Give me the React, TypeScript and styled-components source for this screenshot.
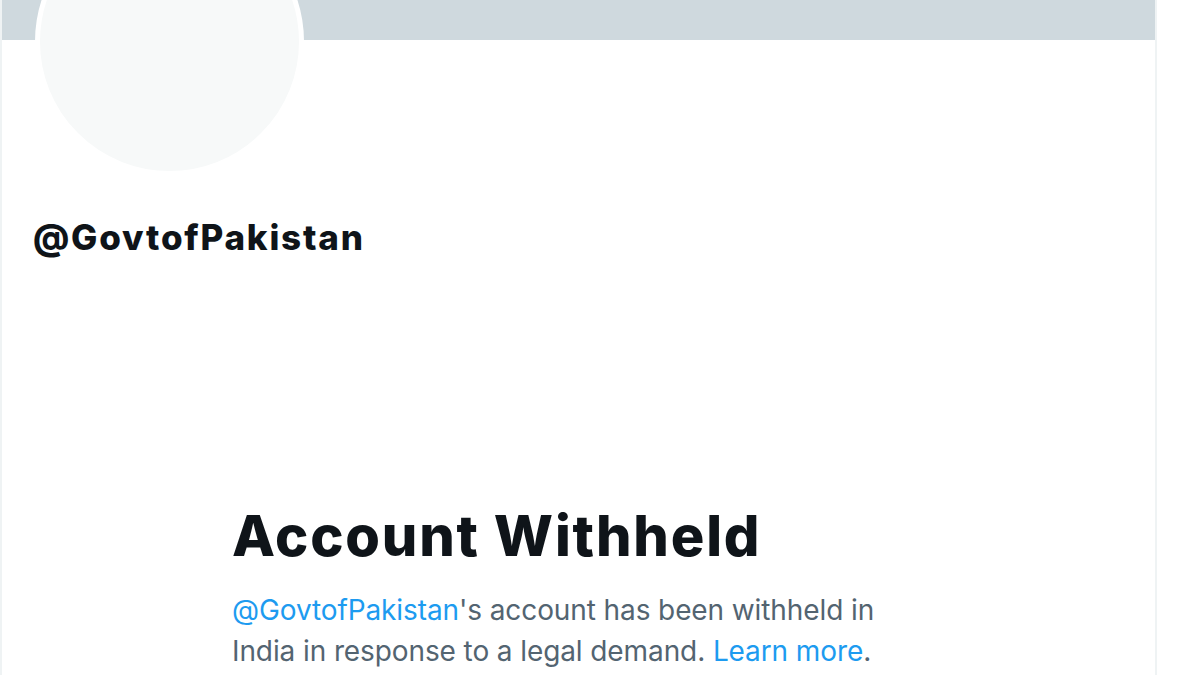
import React from "react";
import styled, { createGlobalStyle } from "styled-components";

const Global = createGlobalStyle`
  html, body { margin: 0; padding: 0; background: #ffffff; }
  body { font-family: Inter, "Liberation Sans", Arial, sans-serif; overflow: hidden; }
`;

const Column = styled.main`
  width: 1153px;
  height: 675px;
  border-left: 2px solid #eff3f4;
  border-right: 2px solid #eff3f4;
  background: #ffffff;
  display: flex;
  flex-direction: column;
`;

const Banner = styled.div`
  height: 40px;
  background: #cfd9de;
  flex-shrink: 0;
`;

const ProfileHead = styled.section`
  display: flex;
  flex-direction: column;
  align-items: flex-start;
  padding-left: 33px;
`;

const Avatar = styled.div`
  width: 259px;
  height: 259px;
  margin-top: -133px;
  border-radius: 50%;
  background: #f7f9f9;
  border: 5px solid #ffffff;
`;

const Handle = styled.h2`
  margin: 41px 0 0 -2px;
  font-size: 35px;
  font-weight: 800;
  color: #0f1419;
  line-height: 40px;
  letter-spacing: 1.8px;
`;

const Notice = styled.section`
  display: flex;
  flex-direction: column;
  padding: 247px 0 0 230px;
`;

const Title = styled.h1`
  margin: 0;
  font-size: 56px;
  line-height: 64px;
  font-weight: 800;
  color: #0f1419;
  letter-spacing: 1.8px;
`;

const Body = styled.p`
  margin: 22px 0 0 0;
  width: 680px;
  font-size: 28px;
  line-height: 41px;
  color: #536471;
  letter-spacing: -0.1px;
`;

const Link = styled.a`
  color: #1d9bf0;
  text-decoration: none;
`;

export default function App() {
  return (
    <>
      <Global />
      <Column>
        <Banner />
        <ProfileHead>
          <Avatar />
          <Handle>@GovtofPakistan</Handle>
        </ProfileHead>
        <Notice>
          <Title>Account Withheld</Title>
          <Body>
            <Link href="#">@GovtofPakistan</Link>'s account has been withheld in
            India in response to a legal demand. <Link href="#">Learn more</Link>.
          </Body>
        </Notice>
      </Column>
    </>
  );
}
